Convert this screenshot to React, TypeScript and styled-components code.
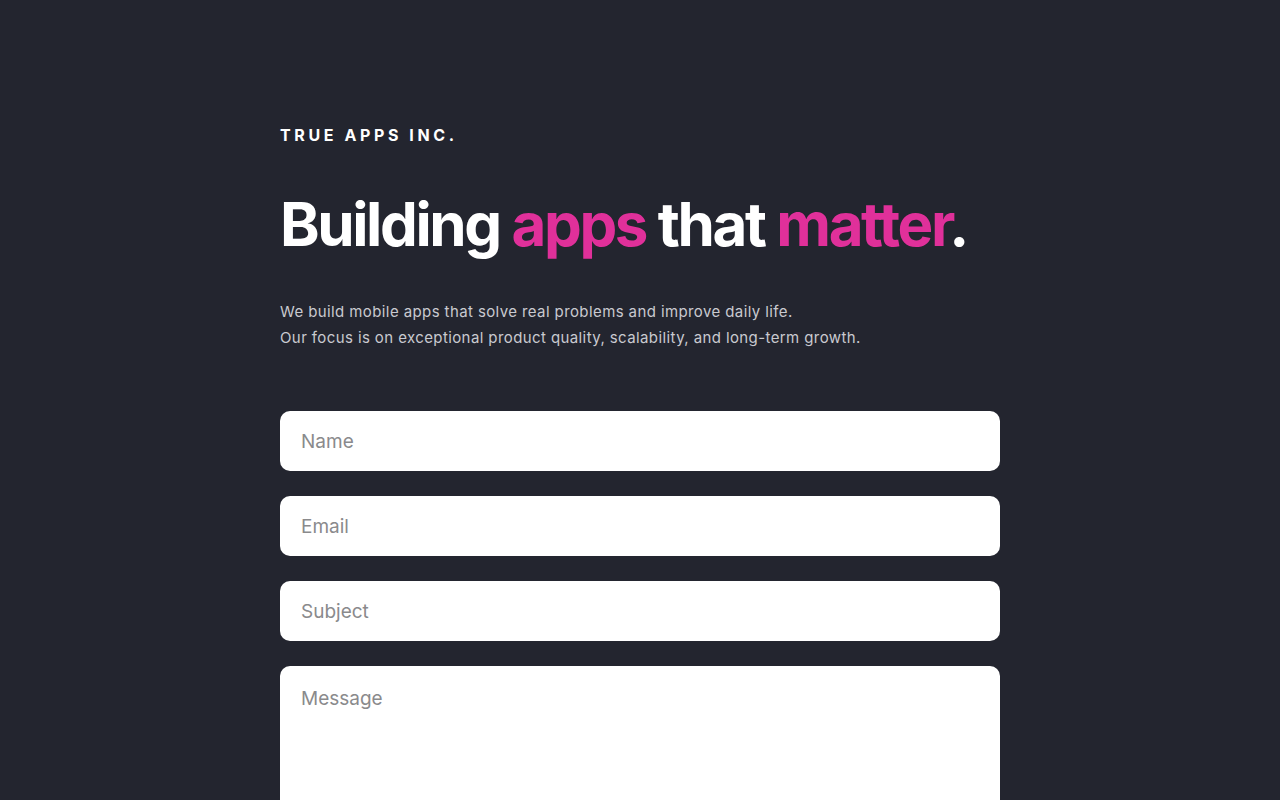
import React from 'react';
import styled, { createGlobalStyle } from 'styled-components';

const GlobalStyle = createGlobalStyle`
    html, body {
        margin: 0;
        background: #23252f;
    }
    body {
        font-family: Inter, "Noto Sans", sans-serif;
    }
`;

const Page = styled.div`
    min-height: 800px;
    display: flex;
    justify-content: center;
    padding-top: 124px;
    box-sizing: border-box;
`;

const Content = styled.section`
    width: 720px;
    display: flex;
    flex-direction: column;
`;

const Brand = styled.div`
    color: #ffffff;
    font-size: 16px;
    font-weight: 700;
    letter-spacing: 3.6px;
    line-height: 22px;
`;

const Headline = styled.h1`
    margin: 38px 0 0;
    color: #ffffff;
    font-size: 60px;
    font-weight: 700;
    letter-spacing: -2.4px;
    line-height: 80px;
    white-space: nowrap;
`;

const Accent = styled.span`
    color: #e0309a;
`;

const Intro = styled.p`
    margin: 35px 0 0;
    color: #c9cad0;
    font-size: 15px;
    letter-spacing: 0.4px;
    line-height: 26px;
`;

const Form = styled.form`
    margin-top: 60px;
    display: flex;
    flex-direction: column;
    gap: 25px;
`;

const Field = styled.input`
    height: 60px;
    border: none;
    border-radius: 10px;
    padding: 0 21px;
    background: #ffffff;
    font-family: Inter, "Noto Sans", sans-serif;
    font-size: 19px;
    color: #23252f;
    outline: none;

    &::placeholder {
        color: #8a8a8c;
    }
`;

const Message = styled.textarea`
    height: 180px;
    border: none;
    border-radius: 10px;
    padding: 21px 21px;
    background: #ffffff;
    font-family: Inter, "Noto Sans", sans-serif;
    font-size: 19px;
    color: #23252f;
    resize: none;
    outline: none;

    &::placeholder {
        color: #8a8a8c;
    }
`;

export default function App() {
    return (
        <>
            <GlobalStyle />
            <Page>
                <Content>
                    <Brand>TRUE APPS INC.</Brand>
                    <Headline>
                        Building <Accent>apps</Accent> that <Accent>matter</Accent>.
                    </Headline>
                    <Intro>
                        We build mobile apps that solve real problems and improve daily life.
                        <br />
                        Our focus is on exceptional product quality, scalability, and long-term growth.
                    </Intro>
                    <Form>
                        <Field placeholder="Name" />
                        <Field placeholder="Email" />
                        <Field placeholder="Subject" />
                        <Message placeholder="Message" />
                    </Form>
                </Content>
            </Page>
        </>
    );
}
